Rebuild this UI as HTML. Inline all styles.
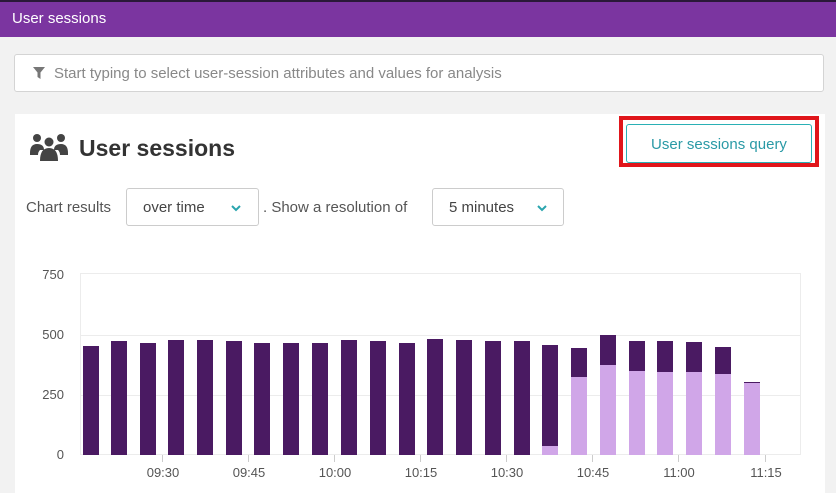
<!DOCTYPE html>
<html><head><style>
*{margin:0;padding:0;box-sizing:border-box}
body{width:836px;height:493px;overflow:hidden;background:#f2f2f2;font-family:"Liberation Sans",sans-serif;position:relative}
.hdr{position:absolute;left:0;top:0;width:836px;height:37px;background:#7b35a0;border-top:2px solid #2a1838;color:#fff;font-size:15px;padding:8px 0 0 12px}
.search{position:absolute;left:14px;top:54px;width:810px;height:38px;background:#fff;border:1px solid #d4d4d4;border-radius:3px;color:#888;font-size:15px;padding:10px 0 0 39px}
.card{position:absolute;left:15px;top:114px;width:810px;height:379px;background:#fff}
.abs{position:absolute}
.sel{position:absolute;height:38px;border:1px solid #ccc;border-radius:3px;background:#fff;font-size:15px;color:#444;padding:10px 0 0 16px}
.lbl{font-size:15px;color:#555}
.yl{position:absolute;left:30px;width:34px;text-align:right;font-size:13px;color:#555}
.xl{position:absolute;top:465px;width:50px;text-align:center;font-size:13px;color:#555}
</style></head><body>
<div class="hdr">User sessions</div>
<div class="search"><svg class="abs" style="left:18px;top:12px" width="12" height="13" viewBox="0 0 12 13"><path d="M0 0H12L7.5 5.5V12L4.5 10V5.5Z" fill="#777"/></svg>Start typing to select user-session attributes and values for analysis</div>
<div class="card"></div>
<svg class="abs" style="left:30px;top:133px" width="38" height="28" viewBox="0 0 38 28"><g fill="#444"><circle cx="7" cy="5" r="4"/><circle cx="31" cy="5" r="4"/><circle cx="19" cy="9" r="4.5"/><path d="M0 20q0-9 7-9t7 6H10q-2 2-2 5H0z"/><path d="M38 20q0-9-7-9t-7 6h4q2 2 2 5h8z"/><path d="M10 28q0-13 9-13t9 13z"/></g></svg>
<div class="abs" style="left:79px;top:135px;font-size:23px;font-weight:bold;color:#333">User sessions</div>
<div class="abs" style="left:619px;top:116px;width:200px;height:51px;border:4px solid #e0161b"></div>
<div class="abs" style="left:626px;top:124px;width:186px;height:39px;border:1px solid #2ab0b5;border-radius:3px;color:#2a9aa6;font-size:15px;text-align:center;padding-top:11px">User sessions query</div>
<div class="abs lbl" style="left:26px;top:199px">Chart results</div>
<div class="sel" style="left:126px;top:188px;width:133px">over time<svg class="abs" style="left:104px;top:16px" width="10" height="7" viewBox="0 0 10 7"><path d="M1 1L5 5L9 1" stroke="#2aa5ae" stroke-width="2" fill="none"/></svg></div>
<div class="abs lbl" style="left:263px;top:199px">. Show a resolution of</div>
<div class="sel" style="left:432px;top:188px;width:132px">5 minutes<svg class="abs" style="left:104px;top:16px" width="10" height="7" viewBox="0 0 10 7"><path d="M1 1L5 5L9 1" stroke="#2aa5ae" stroke-width="2" fill="none"/></svg></div>
<div class="yl" style="top:267px">750</div><div class="yl" style="top:327px">500</div><div class="yl" style="top:387px">250</div><div class="yl" style="top:447px">0</div>
<svg class="abs" style="left:0;top:0" width="836" height="493">
<g stroke="#ececec" fill="none"><rect x="80.5" y="273.5" width="720" height="181"/><line x1="80" y1="335.5" x2="800" y2="335.5"/><line x1="80" y1="395.5" x2="800" y2="395.5"/></g>
<g stroke="#ccc"><line x1="162.5" y1="455" x2="162.5" y2="462"/><line x1="248.5" y1="455" x2="248.5" y2="462"/><line x1="334.5" y1="455" x2="334.5" y2="462"/><line x1="420.5" y1="455" x2="420.5" y2="462"/><line x1="506.5" y1="455" x2="506.5" y2="462"/><line x1="592.5" y1="455" x2="592.5" y2="462"/><line x1="678.5" y1="455" x2="678.5" y2="462"/><line x1="765.5" y1="455" x2="765.5" y2="462"/></g>
<g fill="#4a1a62">
<rect x="83" y="346" width="16" height="109"/><rect x="111" y="341" width="16" height="114"/><rect x="140" y="343" width="16" height="112"/><rect x="168" y="340" width="16" height="115"/><rect x="197" y="340" width="16" height="115"/><rect x="226" y="341" width="16" height="114"/><rect x="254" y="343" width="16" height="112"/><rect x="283" y="343" width="16" height="112"/><rect x="312" y="343" width="16" height="112"/><rect x="341" y="340" width="16" height="115"/><rect x="370" y="341" width="16" height="114"/><rect x="399" y="343" width="16" height="112"/><rect x="427" y="339" width="16" height="116"/><rect x="456" y="340" width="16" height="115"/><rect x="485" y="341" width="16" height="114"/><rect x="514" y="341" width="16" height="114"/><rect x="542" y="345" width="16" height="110"/><rect x="571" y="348" width="16" height="30"/><rect x="600" y="335" width="16" height="31"/><rect x="629" y="341" width="16" height="31"/><rect x="657" y="341" width="16" height="32"/><rect x="686" y="342" width="16" height="31"/><rect x="715" y="347" width="16" height="28"/><rect x="744" y="382" width="16" height="2"/></g>
<g fill="#d0a6e8"><rect x="542" y="446" width="16" height="9"/><rect x="571" y="377" width="16" height="78"/><rect x="600" y="365" width="16" height="90"/><rect x="629" y="371" width="16" height="84"/><rect x="657" y="372" width="16" height="83"/><rect x="686" y="372" width="16" height="83"/><rect x="715" y="374" width="16" height="81"/><rect x="744" y="383" width="16" height="72"/></g>
</svg>
<div class="xl" style="left:138px">09:30</div><div class="xl" style="left:224px">09:45</div><div class="xl" style="left:310px">10:00</div><div class="xl" style="left:396px">10:15</div><div class="xl" style="left:482px">10:30</div><div class="xl" style="left:568px">10:45</div><div class="xl" style="left:654px">11:00</div><div class="xl" style="left:741px">11:15</div>
</body></html>
